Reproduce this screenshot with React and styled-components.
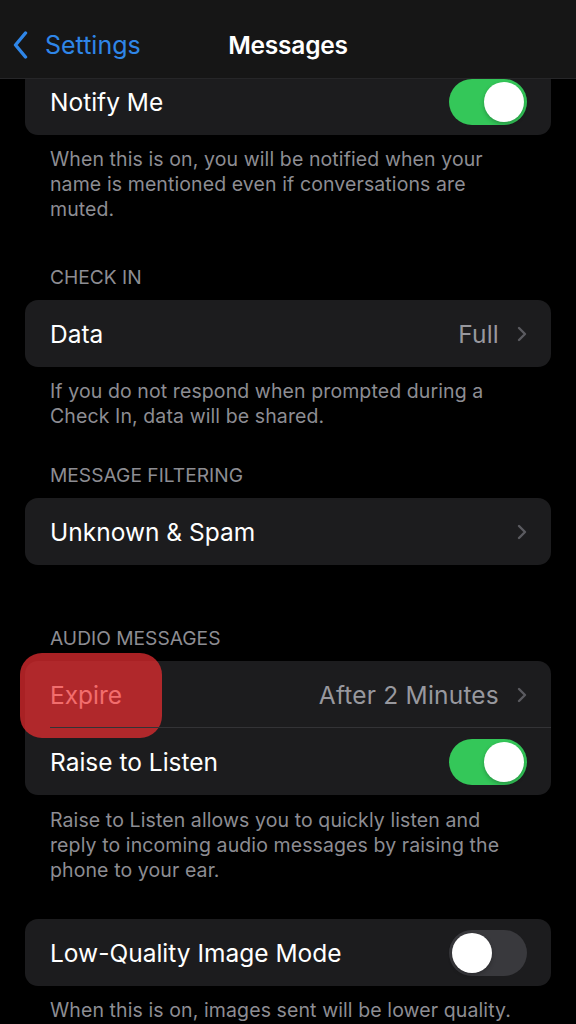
import styled, { createGlobalStyle } from "styled-components";

const GlobalStyle = createGlobalStyle`
  html, body {
    margin: 0;
    padding: 0;
    background: #000;
  }
  body {
    font-family: Inter, "Noto Sans", "Liberation Sans", sans-serif;
    -webkit-font-smoothing: antialiased;
  }
`;

const Chevron = ({ color = "#5b5b60", w = 10, h = 16, stroke = 2.4 }) => (
  <svg width={w} height={h} viewBox="0 0 10 16" fill="none">
    <path
      d="M2 2l6 6-6 6"
      stroke={color}
      strokeWidth={stroke}
      strokeLinecap="round"
      strokeLinejoin="round"
    />
  </svg>
);

const BackChevron = () => (
  <svg width="15" height="28" viewBox="0 0 15 28" fill="none">
    <path
      d="M12.5 2L2.5 14l10 12"
      stroke="#2f86e8"
      strokeWidth="3.4"
      strokeLinecap="round"
      strokeLinejoin="round"
    />
  </svg>
);

const App = () => {
  return (
    <Page>
      <GlobalStyle />
      <NavBar>
        <BackButton>
          <BackChevron />
          <span>Settings</span>
        </BackButton>
        <NavTitle>Messages</NavTitle>
      </NavBar>

      <Body>
        <Scroll>
          <Card $top={-11}>
            <Row>
              <Label>Notify Me</Label>
              <Toggle $on />
            </Row>
          </Card>
          <Footer>
            When this is on, you will be notified when your name is mentioned
            even if conversations are muted.
          </Footer>

          <SectionTitle $top={44}>Check In</SectionTitle>
          <Card>
            <Row>
              <Label>Data</Label>
              <Trailing>
                <Value>Full</Value>
                <Chevron />
              </Trailing>
            </Row>
          </Card>
          <Footer>
            If you do not respond when prompted during a Check In, data will be
            shared.
          </Footer>

          <SectionTitle $top={35}>Message Filtering</SectionTitle>
          <Card>
            <Row>
              <Label>Unknown &amp; Spam</Label>
              <Trailing>
                <Chevron />
              </Trailing>
            </Row>
          </Card>

          <SectionTitle $top={62}>Audio Messages</SectionTitle>
          <Card>
            <Highlight />
            <Row $divider>
              <Label $tint>Expire</Label>
              <Trailing>
                <Value>After 2 Minutes</Value>
                <Chevron />
              </Trailing>
            </Row>
            <Row>
              <Label>Raise to Listen</Label>
              <Toggle $on />
            </Row>
          </Card>
          <Footer $top={13}>
            Raise to Listen allows you to quickly listen and reply to incoming
            audio messages by raising the phone to your ear.
          </Footer>

          <Card $top={36}>
            <Row>
              <Label>Low-Quality Image Mode</Label>
              <Toggle />
            </Row>
          </Card>
          <Footer $top={12}>
            When this is on, images sent will be lower quality.
          </Footer>
        </Scroll>
      </Body>
    </Page>
  );
};

export default App;

const Page = styled.div`
  width: 576px;
  height: 1024px;
  background: #000;
  display: flex;
  flex-direction: column;
  overflow: hidden;
`;

const NavBar = styled.div`
  position: relative;
  z-index: 2;
  flex: 0 0 79px;
  height: 79px;
  box-sizing: border-box;
  background: #161616;
  border-bottom: 1px solid #262628;
  display: grid;
  grid-template-columns: 1fr auto 1fr;
  align-items: center;
  padding: 11px 0 0 13px;
`;

const BackButton = styled.div`
  display: flex;
  align-items: center;
  gap: 17px;
  color: #2f86e8;
  font-size: 25px;
`;

const NavTitle = styled.div`
  color: #fff;
  font-size: 24.5px;
  font-weight: 600;
  letter-spacing: -0.2px;
  padding-right: 13px;
`;

const Body = styled.div`
  flex: 1;
  overflow: hidden;
`;

const Scroll = styled.div`
  padding: 0 25px;
  display: flex;
  flex-direction: column;
`;

const Card = styled.div`
  position: relative;
  margin-top: ${(p) => p.$top || 0}px;
  background: #1c1c1e;
  border-radius: 13px;
`;

const Row = styled.div`
  height: 67px;
  display: flex;
  align-items: center;
  justify-content: space-between;
  padding: 0 24px 0 25px;
  position: relative;

  ${(p) =>
    p.$divider &&
    `
    &::after {
      content: "";
      position: absolute;
      left: 25px;
      right: 0;
      bottom: 0;
      height: 1px;
      background: #333336;
    }
  `}
`;

const Label = styled.span`
  color: ${(p) => (p.$tint ? "#f26d6d" : "#fff")};
  font-size: 24.5px;
`;

const Trailing = styled.div`
  display: flex;
  align-items: center;
  gap: 18px;
`;

const Value = styled.span`
  color: #98989e;
  font-size: 24.5px;
  letter-spacing: 0.2px;
`;

const Toggle = styled.div`
  width: 78px;
  height: 46px;
  border-radius: 23px;
  background: ${(p) => (p.$on ? "#34c759" : "#39393d")};
  position: relative;

  &::after {
    content: "";
    position: absolute;
    top: 3px;
    left: ${(p) => (p.$on ? "35px" : "3px")};
    width: 40px;
    height: 40px;
    border-radius: 50%;
    background: #fff;
    box-shadow: 0 2px 4px rgba(0, 0, 0, 0.25);
  }
`;

const Footer = styled.div`
  margin-top: ${(p) => p.$top || 12}px;
  padding: 0 25px;
  color: #8d8d93;
  font-size: 19.5px;
  line-height: 25px;
  letter-spacing: 0.1px;
`;

const SectionTitle = styled.div`
  margin-top: ${(p) => p.$top}px;
  margin-bottom: 12px;
  padding: 0 25px;
  color: #8d8d93;
  font-size: 19.2px;
  line-height: 22px;
  text-transform: uppercase;
`;

/* red annotation drawn behind the row text */
const Highlight = styled.div`
  position: absolute;
  left: -5px;
  top: -8px;
  width: 142px;
  height: 85px;
  border-radius: 22px;
  background: rgba(228, 45, 48, 0.74);
  pointer-events: none;
`;
